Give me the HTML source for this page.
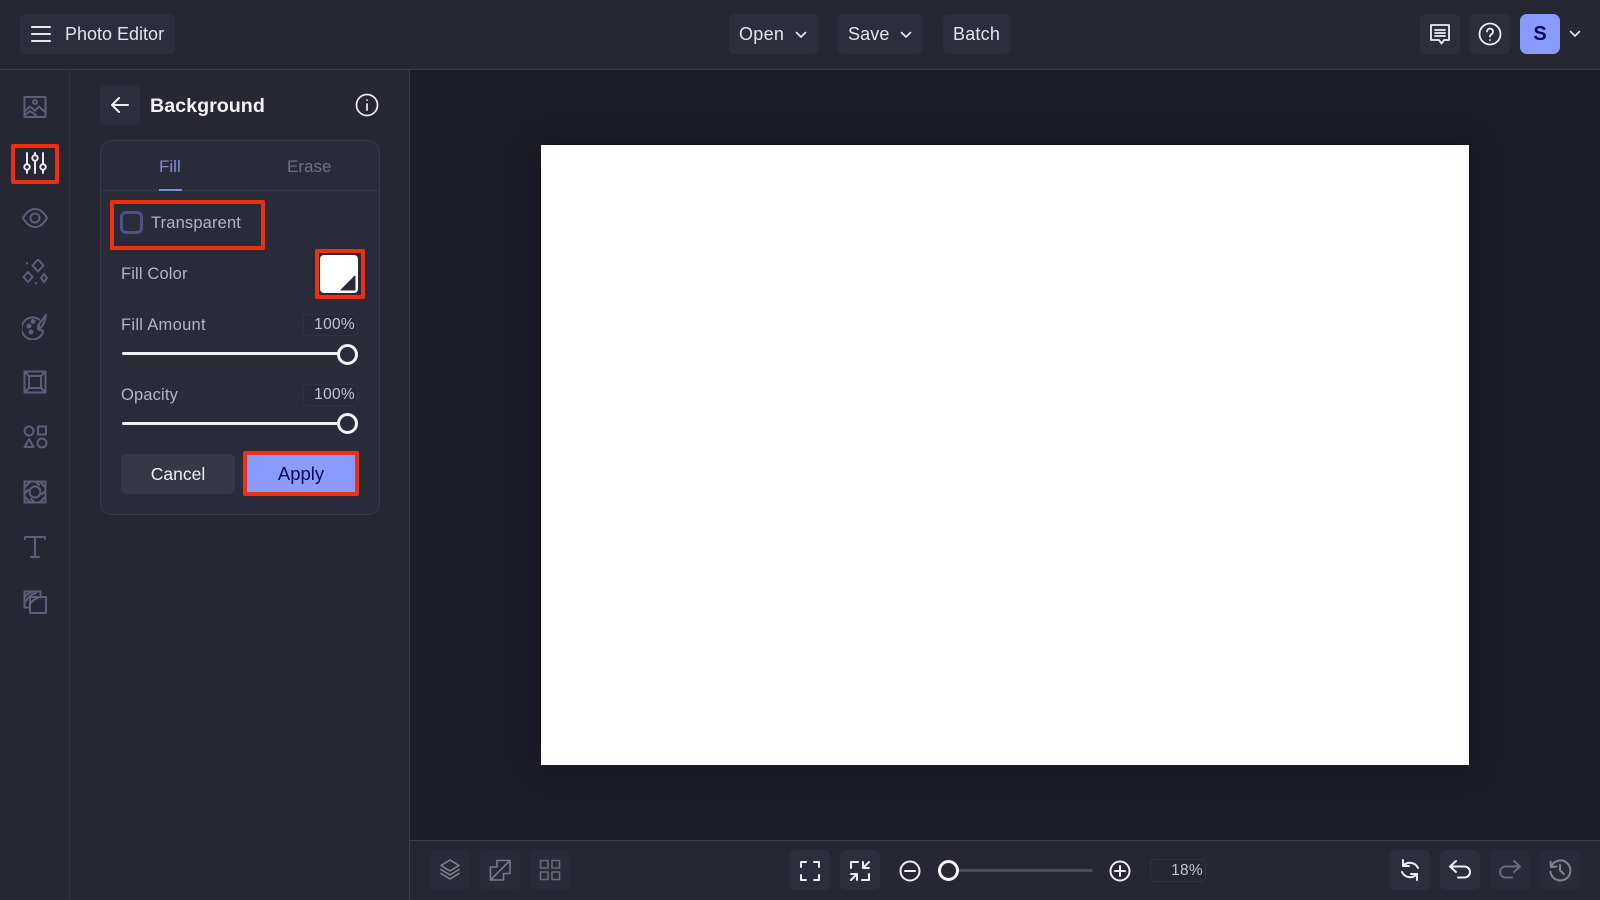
<!DOCTYPE html>
<html lang="en"><head><meta charset="utf-8"><title>Photo Editor</title>
<style>
*{box-sizing:border-box}
html,body{margin:0;padding:0;width:1600px;height:900px;overflow:hidden;background:#1d1d2a;font-family:"Liberation Sans",sans-serif;color:#e4e4ea}
.a{position:absolute}
.btn{position:absolute;background:#2d2e3b;border-radius:5px}
.t{position:absolute;white-space:nowrap;line-height:20px}
svg{position:absolute;fill:none;stroke-linecap:round;stroke-linejoin:round}
.rail svg{stroke:#5d5e79;stroke-width:2;left:22px;width:26px;height:26px}
.red{position:absolute;border:4px solid #ee2f10;border-radius:2px}
.val{position:absolute;background:#292a37;box-shadow:inset 0 0 0 1px #323342;border-radius:4px;color:#c5c5d0;font-size:15.500px;text-align:right;padding-right:3px;line-height:21px;letter-spacing:.3px}
.track{position:absolute;height:3px;background:#f0f0f4;border-radius:2px}
.thumb{position:absolute;width:21px;height:21px;border:3px solid #f4f4f6;border-radius:50%;background:#2b2c3b}
.lbl{font-size:16.500px;color:#b4b5c3;letter-spacing:.15px}
</style></head><body>
<div class="a" style="left:0;top:0;width:1600px;height:70px;background:#262733;border-bottom:1px solid #3c3d4c"></div>
<div class="a rail" style="left:0;top:70px;width:70px;height:830px;background:#262733;border-right:1px solid #353645"></div>
<div class="a" style="left:70px;top:70px;width:340px;height:830px;background:#262733;border-right:1px solid #3c3d4c"></div>
<div class="a" style="left:410px;top:840px;width:1190px;height:60px;background:#262733;border-top:1px solid #3c3d4c"></div>
<div class="a" style="left:541px;top:145px;width:928px;height:620px;background:#fff;box-shadow:0 0 24px #14141e"></div>

<!-- top bar -->
<div class="btn" style="left:20px;top:14px;width:155px;height:40px"></div>
<svg style="left:30px;top:24px" width="22" height="20" stroke="#e8e8ee" stroke-width="2"><path d="M2 3h18M2 10h18M2 17h18"/></svg>
<div class="t" style="left:65px;top:24px;font-size:18px">Photo Editor</div>

<div class="btn" style="left:729px;top:14px;width:89px;height:40px"></div>
<div class="t" style="left:739px;top:24px;font-size:18px;letter-spacing:.3px">Open</div>
<svg style="left:795px;top:30px" width="12" height="10" stroke="#e4e4ea" stroke-width="1.700"><path d="M1.500 2.500 6 7l4.500-4.500"/></svg>
<div class="btn" style="left:838px;top:14px;width:85px;height:40px"></div>
<div class="t" style="left:848px;top:24px;font-size:18px;letter-spacing:.1px">Save</div>
<svg style="left:900px;top:30px" width="12" height="10" stroke="#e4e4ea" stroke-width="1.700"><path d="M1.500 2.500 6 7l4.500-4.500"/></svg>
<div class="btn" style="left:943px;top:14px;width:68px;height:40px"></div>
<div class="t" style="left:953px;top:24px;font-size:18px;letter-spacing:.2px">Batch</div>

<div class="btn" style="left:1420px;top:14px;width:40px;height:40px"></div>
<svg style="left:1428px;top:22px" width="24" height="24" stroke="#eeeef2" stroke-width="1.800"><path d="M3 3h18v15h-5l-2.500 3.500L11 18H3zM7 8h10M7 11h10M7 14h10"/></svg>
<div class="btn" style="left:1470px;top:14px;width:40px;height:40px"></div>
<svg style="left:1478px;top:22px" width="24" height="24" stroke="#eeeef2" stroke-width="1.800"><circle cx="12" cy="12" r="10.500"/><path d="M9 9.500a3 3 0 1 1 4.500 2.700c-1 .6-1.500 1.200-1.500 2.300"/><path d="M12 18v.1"/></svg>
<div class="a" style="left:1520px;top:14px;width:40px;height:40px;border-radius:7px;background:#8a9bfd;color:#0b0b55;font-weight:bold;font-size:20px;text-align:center;line-height:40px">S</div>
<svg style="left:1569px;top:29px" width="12" height="10" stroke="#e4e4ea" stroke-width="1.700"><path d="M1.500 2.500 6 7l4.500-4.500"/></svg>

<!-- rail -->
<div class="rail">
<svg style="top:94px" viewBox="0 0 26 26"><rect x="2.500" y="3" width="21" height="20"/><circle cx="13" cy="8" r="2"/><path d="M3 17l5-4.500 5 4 4-4 6 5.500M3 21l5-4 6 4"/></svg>
<svg style="top:150px;stroke:#e8e8ee" viewBox="0 0 26 26"><path d="M5 3v11M5 20v3M13 3v2M13 11v12M21 3v11M21 20v3"/><circle cx="5" cy="17" r="2.700"/><circle cx="13" cy="8" r="2.700"/><circle cx="21" cy="17" r="2.700"/></svg>
<svg style="top:205px" viewBox="0 0 26 26"><path d="M1 13C5 6 9 4 13 4s8 2 12 9c-4 7-8 9-12 9s-8-2-12-9z"/><circle cx="13" cy="13" r="4.500"/></svg>
<svg style="top:259px" viewBox="0 0 26 26"><path d="M16 0.500l5.500 6-5.500 6-5.500-6zM6 13l4.500 5-4.500 5-4.500-5zM22 15l3 4-3 4-3-4z"/><path d="M5 4v.5M14 24v.5"/></svg>
<svg style="top:314px" viewBox="0 0 26 26"><path d="M17 5.500A11 11 0 1 0 21 18c.3-1.500-1.500-2-3-2-2 0-3-2-1-4M24 1c-2 3-6 7-8 11l2 2c3-2 5-7 6-13z"/><circle cx="7" cy="12" r="1.500" fill="#5d5e79"/><circle cx="11" cy="7.500" r="1.500" fill="#5d5e79"/><circle cx="9" cy="18" r="1.500" fill="#5d5e79"/></svg>
<svg style="top:369px" viewBox="0 0 26 26"><rect x="2.500" y="2.500" width="21" height="21"/><rect x="7" y="7" width="12" height="12"/><path d="M2.500 2.500 7 7M23.500 2.500 19 7M2.500 23.500 7 19M23.500 23.500 19 19"/></svg>
<svg style="top:424px" viewBox="0 0 26 26"><circle cx="7" cy="7" r="4.500"/><rect x="16" y="2.500" width="8" height="8"/><path d="M7 15l4.500 8h-9z"/><circle cx="20" cy="19" r="4.500"/></svg>
<svg style="top:479px" viewBox="0 0 26 26"><rect x="2.500" y="2.500" width="21" height="21"/><circle cx="13" cy="13" r="5.500"/><path d="M3 8l5-5M3 14l3-3M18 3l5 5M3 18l5 5M18 23l5-5M14 3l3 3M12 23l-3-3M23 12l-3 3"/></svg>
<svg style="top:534px" viewBox="0 0 26 26"><path d="M3 5V3h20v2M13 3v20M9 23h8"/></svg>
<svg style="top:589px" viewBox="0 0 26 26"><path d="M8 18.500H2.500v-16h16V8"/><rect x="8" y="8" width="16" height="16"/><path d="M3 8c2-3 4-4 7-5M3 13c3-5 6-7 11-9M8 15c2-3 4-5 8-6"/></svg>
</div>
<div class="red" style="left:11px;top:144px;width:48px;height:40px"></div>

<!-- panel header -->
<div class="btn" style="left:100px;top:85px;width:40px;height:40px"></div>
<svg style="left:110px;top:95px" width="20" height="20" stroke="#eeeef2" stroke-width="2"><path d="M18 10H2M9 3l-7 7 7 7"/></svg>
<div class="t" style="left:150px;top:96px;font-size:19.700px;font-weight:bold;color:#f2f2f5">Background</div>
<svg style="left:355px;top:93px" width="24" height="24" stroke="#eeeef2" stroke-width="1.700"><circle cx="12" cy="12" r="10.500"/><path d="M12 11v6M12 7v.1"/></svg>

<!-- card -->
<div class="a" style="left:100px;top:140px;width:280px;height:375px;background:#2a2b39;border:1px solid #3a3b4a;border-radius:12px"></div>
<div class="a" style="left:101px;top:190px;width:278px;height:1px;background:#383948"></div>
<div class="t" style="left:159px;top:157px;font-size:17px;color:#7f8bdf">Fill</div>
<div class="a" style="left:159px;top:189px;width:23px;height:2px;background:#7f8bdf"></div>
<div class="t" style="left:287px;top:157px;font-size:17px;color:#6f7085">Erase</div>

<div class="red" style="left:110px;top:200px;width:155px;height:50px"></div>
<div class="a" style="left:120px;top:211px;width:23px;height:23px;background:#2b2c3a;border:3px solid #4e5087;border-radius:6px"></div>
<div class="t lbl" style="left:151px;top:213px">Transparent</div>
<div class="t lbl" style="left:121px;top:264px">Fill Color</div>
<div class="red" style="left:315px;top:249px;width:50px;height:50px"></div>
<div class="a" style="left:320px;top:255px;width:38px;height:38px;background:#fff;border-radius:4px"></div>
<svg style="left:340px;top:275px" width="16" height="16"><path d="M15 1v14H1z" fill="#2a2b39" stroke="#2a2b39"/></svg>

<div class="t lbl" style="left:121px;top:315px;letter-spacing:.3px">Fill Amount</div>
<div class="val" style="left:303px;top:314px;width:55px;height:22px">100%</div>
<div class="track" style="left:122px;top:352px;width:218px"></div>
<div class="thumb" style="left:337px;top:344px"></div>

<div class="t lbl" style="left:121px;top:385px">Opacity</div>
<div class="val" style="left:303px;top:384px;width:55px;height:22px">100%</div>
<div class="track" style="left:122px;top:422px;width:218px"></div>
<div class="thumb" style="left:337px;top:413px"></div>

<div class="btn" style="left:121px;top:454px;width:114px;height:40px;background:#373846"></div>
<div class="t" style="left:121px;top:464px;width:114px;text-align:center;font-size:17.500px;color:#eeeef2">Cancel</div>
<div class="a" style="left:243px;top:451px;width:116px;height:45px;background:#8a9bfd;border:4px solid #ee2f10;border-radius:2px"></div>
<div class="t" style="left:243px;top:464px;width:116px;text-align:center;font-size:18.500px;color:#0b0b55">Apply</div>

<!-- bottom left -->
<div class="btn" style="left:430px;top:850px;width:40px;height:40px;background:#2a2b38"></div>
<svg style="left:438px;top:858px" width="24" height="24" stroke="#85858f" stroke-width="1.600"><path d="M12 2l9 5.500-9 5.500-9-5.500zM3 11.500l9 5.500 9-5.500M3 15.500l9 5.500 9-5.500"/></svg>
<div class="btn" style="left:480px;top:850px;width:40px;height:40px;background:#2a2b38"></div>
<svg style="left:488px;top:858px" width="24" height="24" stroke="#7b7b86" stroke-width="1.600"><path d="M9 2.500h13v13h-6.500V22H2.500V9H9zM2.500 22 22 2.500"/></svg>
<div class="btn" style="left:530px;top:850px;width:40px;height:40px;background:#2a2b38"></div>
<svg style="left:538px;top:858px" width="24" height="24" stroke="#6c6c78" stroke-width="1.600"><rect x="2.500" y="2.500" width="7.500" height="7.500"/><rect x="14" y="2.500" width="7.500" height="7.500"/><rect x="2.500" y="14" width="7.500" height="7.500"/><rect x="14" y="14" width="7.500" height="7.500"/></svg>

<!-- bottom center -->
<div class="btn" style="left:790px;top:850px;width:40px;height:40px"></div>
<svg style="left:799px;top:860px" width="22" height="22" stroke="#eeeef2" stroke-width="2"><path d="M2 7V2h5M15 2h5v5M20 15v5h-5M7 20H2v-5"/></svg>
<div class="btn" style="left:840px;top:850px;width:40px;height:40px"></div>
<svg style="left:849px;top:860px" width="22" height="22" stroke="#eeeef2" stroke-width="2"><path d="M2 8V2h7M20 14v6h-7M14 8h6M14 8V2M14 8l6-6M8 14H2M8 14v6M8 14l-6 6"/></svg>
<svg style="left:899px;top:860px" width="22" height="22" stroke="#eeeef2" stroke-width="2"><circle cx="11" cy="11" r="9.500"/><path d="M6 11h10"/></svg>
<div class="a" style="left:940px;top:869px;width:153px;height:3px;background:#4b4c5c;border-radius:2px"></div>
<div class="thumb" style="left:938px;top:860px;width:21px;height:21px;background:#262733"></div>
<svg style="left:1109px;top:860px" width="22" height="22" stroke="#eeeef2" stroke-width="2"><circle cx="11" cy="11" r="9.500"/><path d="M6 11h10M11 6v10"/></svg>
<div class="val" style="left:1150px;top:859px;width:56px;height:23px;background:#262733;line-height:23px">18%</div>

<!-- bottom right -->
<div class="btn" style="left:1390px;top:850px;width:40px;height:40px"></div>
<svg style="left:1398px;top:858px" width="24" height="24" stroke="#eeeef2" stroke-width="2"><path d="M5 2v6h6M19 22v-6h-6"/><path d="M5 8a9 9 0 0 1 15 2M19 16a9 9 0 0 1-15-2"/></svg>
<div class="btn" style="left:1440px;top:850px;width:40px;height:40px"></div>
<svg style="left:1448px;top:858px" width="24" height="24" stroke="#eeeef2" stroke-width="2"><path d="M8 3 2 8.500l6 5.500M2 8.500h14.500a5.500 5.500 0 0 1 0 11H10"/></svg>
<div class="btn" style="left:1490px;top:850px;width:40px;height:40px;background:#2a2b38"></div>
<svg style="left:1498px;top:858px" width="24" height="24" stroke="#6c6c78" stroke-width="2"><path d="M16 3l6 5.500-6 5.500M22 8.500H7.500a5.500 5.500 0 0 0 0 11H14"/></svg>
<div class="btn" style="left:1540px;top:850px;width:40px;height:40px;background:#2a2b38"></div>
<svg style="left:1548px;top:858px" width="24" height="24" stroke="#85858f" stroke-width="2"><path d="M2.500 3.500l.5 5.500 5.500-.5M3 9a10 10 0 1 1-.5 5M12 7v5.500l4 3.500"/></svg>
</body></html>
